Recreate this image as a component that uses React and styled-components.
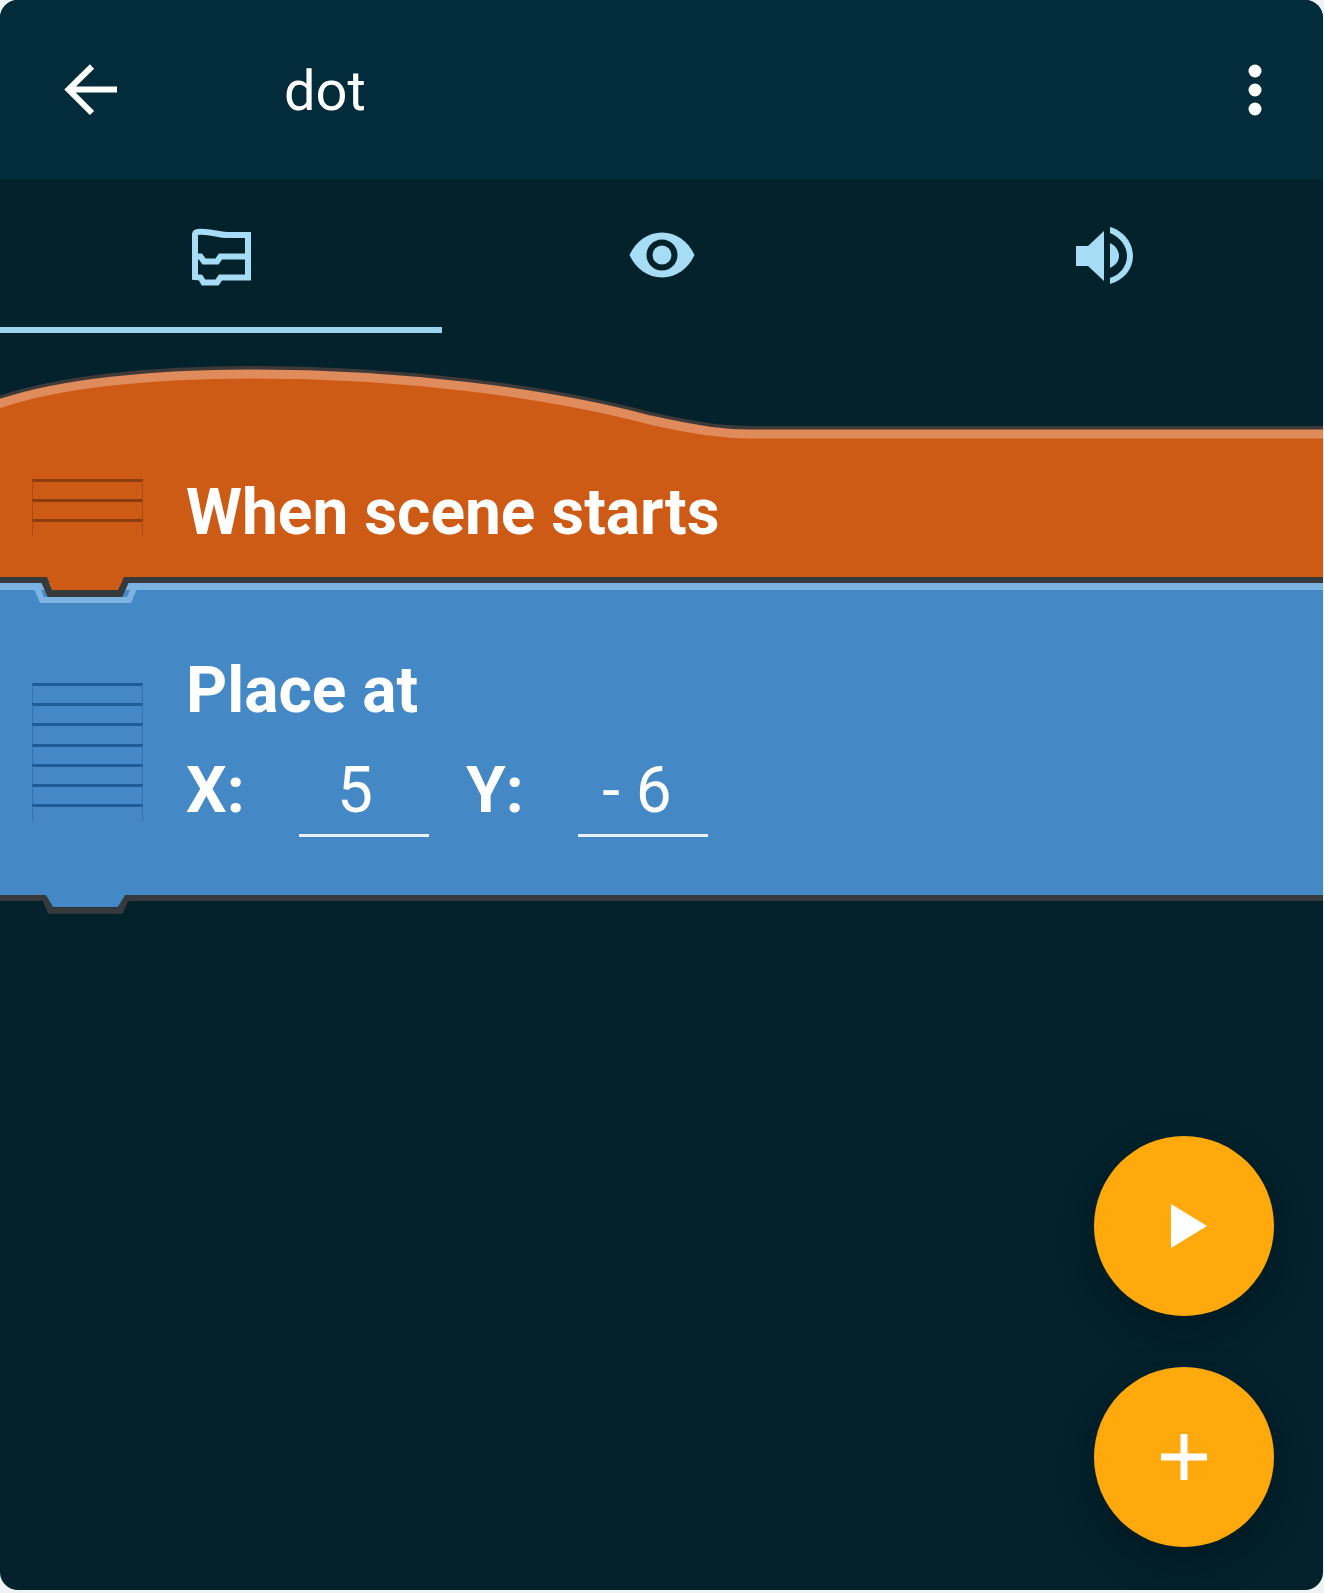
import React from 'react';
import styled, { createGlobalStyle } from 'styled-components';

const GlobalStyle = createGlobalStyle`
  html, body {
    margin: 0;
    background: #eef3f5;
  }
  * {
    box-sizing: border-box;
  }
`;

const Frame = styled.div`
  position: relative;
  width: 1323px;
  height: 1590px;
  overflow: hidden;
  border-radius: 18px;
  background: #03222c;
  font-family: Roboto, 'Noto Sans', sans-serif;
  color: #fff;
`;

const Header = styled.header`
  height: 179px;
  display: flex;
  align-items: center;
  padding: 0 61px 0 64px;
  background: #022c3a;
`;

const Title = styled.h1`
  flex: 1;
  margin: 2px 0 0 166px;
  font-size: 56px;
  font-weight: 400;
  line-height: 1;
`;

const Tabs = styled.nav`
  display: grid;
  grid-template-columns: 442px 1fr 1fr;
  height: 154px;
`;

const Tab = styled.div`
  display: flex;
  align-items: center;
  justify-content: center;
  padding-top: 4px;
  border-bottom: 6px solid ${(p) => (p.$active ? '#9ad5ef' : 'transparent')};
`;

const Workspace = styled.main`
  margin-top: 29px;
`;

const HatCap = styled.svg`
  display: block;
  width: 1323px;
  height: 78px;
`;

const Block = styled.section`
  position: relative;
  display: flex;
  gap: 43px;
  padding-left: 32px;
  height: ${(p) => p.$height}px;
  background: ${(p) => p.$color};
  border-top: ${(p) => (p.$lit ? `7px solid ${p.$lit}` : 'none')};
  border-bottom: 6px solid #363a3d;
  z-index: ${(p) => p.$layer};
`;

const Handle = styled.div`
  flex: none;
  width: 111px;
  margin-top: ${(p) => p.$top}px;
`;

const Grip = styled.div`
  height: ${(p) => (p.$last ? 17 : 20.2)}px;
  border-top: 3px solid ${(p) => p.$tone};
  border-left: 1px solid ${(p) => p.$tone}77;
  border-right: 1px solid ${(p) => p.$tone}77;
`;

const BlockTitle = styled.h2`
  margin: ${(p) => p.$top}px 0 0;
  font-size: 64px;
  font-weight: 700;
  line-height: 75px;
`;

const Fields = styled.div`
  display: flex;
  align-items: flex-start;
  margin-top: 25px;
`;

const FieldLabel = styled.span`
  width: ${(p) => p.$width}px;
  font-size: 64px;
  font-weight: 700;
  line-height: 75px;
`;

const FieldValue = styled.span`
  width: 130px;
  height: 84px;
  margin-right: 37px;
  padding-right: ${(p) => p.$inset}px;
  border-bottom: 3px solid #e6f1fa;
  font-size: 64px;
  font-weight: 400;
  line-height: 75px;
  text-align: center;
`;

const Notch = styled.svg`
  position: absolute;
  left: 0;
  top: ${(p) => p.$top}px;
  width: 160px;
  height: 40px;
`;

const FabColumn = styled.div`
  position: absolute;
  right: 49px;
  bottom: 43px;
  display: flex;
  flex-direction: column;
  gap: 51px;
`;

const Fab = styled.button`
  width: 180px;
  height: 180px;
  display: flex;
  align-items: center;
  justify-content: center;
  padding: 0;
  border: none;
  border-radius: 50%;
  background: #ffa90d;
  box-shadow: 0 14px 36px rgba(0, 10, 15, 0.35);
`;

const PlayGlyph = styled.svg`
  margin-left: 9px;
`;

function BackIcon() {
  return (
    <svg width="54" height="52" viewBox="0 0 54 52" fill="none" stroke="#fff" strokeWidth="6">
      <path d="M53 25.500H6M28 2.500L4.500 25.500L28 49" />
    </svg>
  );
}

function MoreIcon() {
  return (
    <svg width="14" height="52" viewBox="0 0 14 52" fill="#fff">
      <circle cx="7" cy="7" r="6.500" />
      <circle cx="7" cy="26" r="6.500" />
      <circle cx="7" cy="45" r="6.500" />
    </svg>
  );
}

function BlocksIcon() {
  return (
    <svg width="60" height="62" viewBox="0 -4 60 62" fill="none" stroke="#a7dcf5" strokeWidth="6">
      <path d="M4 49V6C4 4 6 3.700 10 3.700C22 3.700 27 7 36 7H57V49.500H29.500L26 54.500H12.500L9.500 49.500Z" />
      <path d="M4 28.500H9.500L13 33.500H26L29.500 28.500H57" />
    </svg>
  );
}

function EyeIcon() {
  return (
    <svg width="66" height="46" viewBox="0 0 66 46">
      <path
        fill="#a7dcf5"
        d="M0.500 23C7 9 19 0.500 33 0.500S59 9 65.500 23C59 37 47 45.500 33 45.500S7 37 0.500 23Z"
      />
      <circle cx="33" cy="23" r="12.500" fill="#a7dcf5" stroke="#03222c" strokeWidth="6" />
    </svg>
  );
}

function SpeakerIcon() {
  return (
    <svg width="60" height="58" viewBox="0 0 60 58" fill="#a7dcf5">
      <path d="M3 20H15L31 5V55L15 40H3Z" />
      <path d="M37 17C43 20 46 25 46 30C46 35 43 39 37 42Z" />
      <path d="M37 1C51 5 60 17 60 30C60 43 51 54 37 58V52C47 49 54 40 54 30C54 20 47 11 37 7Z" />
    </svg>
  );
}

function PlayIcon() {
  return (
    <PlayGlyph width="38" height="46" viewBox="0 0 38 46" fill="#fff">
      <path d="M1 1V45L37 23Z" />
    </PlayGlyph>
  );
}

function PlusIcon() {
  return (
    <svg width="46" height="46" viewBox="0 0 46 46" fill="#fff">
      <path d="M19.500 0H26.500V19.500H46V26.500H26.500V46H19.500V26.500H0V19.500H19.500Z" />
    </svg>
  );
}

function GripHandle({ rows, tone, top }) {
  return (
    <Handle $top={top}>
      {Array.from({ length: rows }, (_, i) => (
        <Grip key={i} $tone={tone} $last={i === rows - 1} />
      ))}
    </Handle>
  );
}

const hatPath =
  'M-4 43C60 20 160 12 250 12C400 12 545 30 650 58C700 69 725 72 750 72L1330 72';

export default function App() {
  return (
    <>
      <GlobalStyle />
      <Frame>
        <Header>
          <BackIcon />
          <Title>dot</Title>
          <MoreIcon />
        </Header>
        <Tabs>
          <Tab $active>
            <BlocksIcon />
          </Tab>
          <Tab>
            <EyeIcon />
          </Tab>
          <Tab>
            <SpeakerIcon />
          </Tab>
        </Tabs>
        <Workspace>
          <HatCap viewBox="0 0 1323 78">
            <path d={hatPath + 'V80H-4Z'} fill="#cd5a15" />
            <path d={hatPath} fill="none" stroke="#3f3a38" strokeWidth="4" transform="translate(0,-6)" />
            <path d={hatPath} fill="none" stroke="#e08b5c" strokeWidth="9" />
          </HatCap>
          <Block $color="#cd5a15" $height={143} $layer={2}>
            <GripHandle rows={3} tone="#8a3d0e" top={39} />
            <BlockTitle $top={35}>When scene starts</BlockTitle>
            <Notch $top={137} viewBox="0 0 160 40">
              <path d="M44 3L50 16.500H120L126 3" fill="none" stroke="#363a3d" strokeWidth="7" />
              <path d="M47 0H124L118 13H52Z" fill="#cd5a15" />
            </Notch>
          </Block>
          <Block $color="#4488c5" $lit="#7db3e0" $height={318} $layer={1}>
            <GripHandle rows={7} tone="#1d5c96" top={93} />
            <div>
              <BlockTitle $top={63}>Place at</BlockTitle>
              <Fields>
                <FieldLabel $width={113}>X:</FieldLabel>
                <FieldValue $inset={18}>5</FieldValue>
                <FieldLabel $width={112}>Y:</FieldLabel>
                <FieldValue $inset={12}>- 6</FieldValue>
              </Fields>
            </div>
            <Notch $top={-7} viewBox="0 0 160 40">
              <path d="M36 3L42 17H129L135 3" fill="none" stroke="#7db3e0" strokeWidth="6" />
            </Notch>
            <Notch $top={305} viewBox="0 0 160 40">
              <path d="M45 3L50.500 15.500H120.500L126 3" fill="none" stroke="#363a3d" strokeWidth="6.500" />
              <path d="M46 0H125L118 12H53Z" fill="#4488c5" />
            </Notch>
          </Block>
        </Workspace>
        <FabColumn>
          <Fab>
            <PlayIcon />
          </Fab>
          <Fab>
            <PlusIcon />
          </Fab>
        </FabColumn>
      </Frame>
    </>
  );
}
